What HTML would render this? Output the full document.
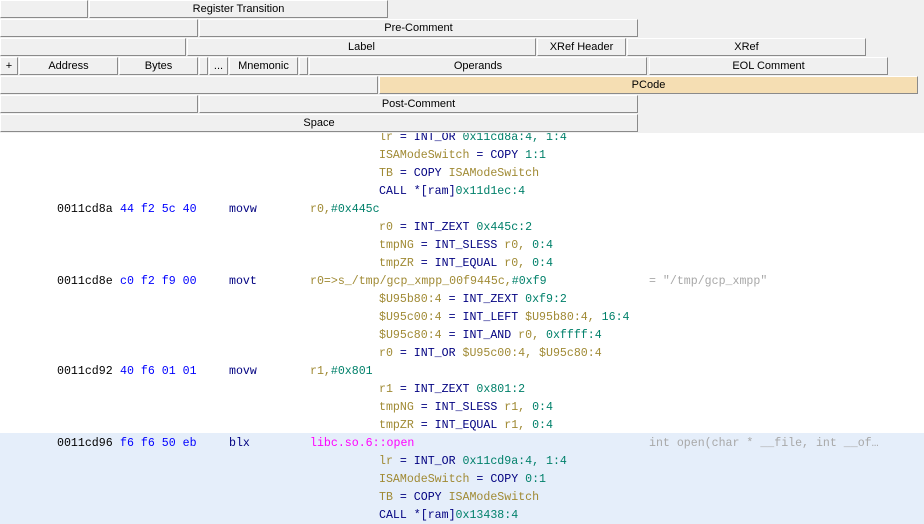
<!DOCTYPE html>
<html><head><style>
html,body{margin:0;width:924px;height:524px;overflow:hidden}
body{background:#fff;position:relative;font-family:"Liberation Sans",sans-serif}
#hdr{position:absolute;left:0;top:0;width:924px;height:133px;background:#f0f0f0;z-index:2}
.b{position:absolute;height:18px;background:#f0f0f0;border-top:1px solid #fff;border-left:1px solid #fff;border-right:1px solid #8a8a8a;border-bottom:1px solid #8a8a8a;box-sizing:border-box;font-size:11px;line-height:16px;text-align:center;color:#000;white-space:nowrap;overflow:hidden}
.p{background:#f5deb3}
#lst{position:absolute;left:0;top:127px;width:924px;font-family:"Liberation Mono",monospace;font-size:11.6px}
.l{position:relative;height:18px;line-height:18px;white-space:pre}
.l span{position:absolute;top:2px}
.l span span{position:static}
.hl{background:#e5eefa}
.a{color:#000}.by{color:#0000ff}.m{color:#000080}.v{color:#a08a34}.o{color:#000080}.c{color:#00806a}.mg{color:#ff00ff}.g{color:#a8a8a8}
</style></head><body>
<div id="hdr">
<div class="b" style="left:0;top:0;width:88px"></div>
<div class="b" style="left:89px;top:0;width:299px">Register Transition</div>
<div class="b" style="left:0;top:19px;width:198px"></div>
<div class="b" style="left:199px;top:19px;width:439px">Pre-Comment</div>
<div class="b" style="left:0;top:38px;width:186px"></div>
<div class="b" style="left:187px;top:38px;width:349px">Label</div>
<div class="b" style="left:537px;top:38px;width:89px">XRef Header</div>
<div class="b" style="left:627px;top:38px;width:239px">XRef</div>
<div class="b" style="left:0;top:57px;width:18px">+</div>
<div class="b" style="left:19px;top:57px;width:99px">Address</div>
<div class="b" style="left:119px;top:57px;width:79px">Bytes</div>
<div class="b" style="left:199px;top:57px;width:9px"></div>
<div class="b" style="left:209px;top:57px;width:19px">...</div>
<div class="b" style="left:229px;top:57px;width:69px">Mnemonic</div>
<div class="b" style="left:299px;top:57px;width:9px"></div>
<div class="b" style="left:309px;top:57px;width:338px">Operands</div>
<div class="b" style="left:649px;top:57px;width:239px">EOL Comment</div>
<div class="b" style="left:0;top:76px;width:378px"></div>
<div class="b p" style="left:379px;top:76px;width:539px">PCode</div>
<div class="b" style="left:0;top:95px;width:198px"></div>
<div class="b" style="left:199px;top:95px;width:439px">Post-Comment</div>
<div class="b" style="left:0;top:114px;width:638px">Space</div>
</div>
<div id="lst">
<div class="l"><span style="left:379px" class="v">lr <span class="o">= INT_OR</span> <span class="c">0x11cd8a:4, 1:4</span></span></div>
<div class="l"><span style="left:379px" class="v">ISAModeSwitch <span class="o">= COPY</span> <span class="c">1:1</span></span></div>
<div class="l"><span style="left:379px" class="v">TB <span class="o">= COPY</span> ISAModeSwitch</span></div>
<div class="l"><span style="left:379px" class="o">CALL *[ram]<span class="c">0x11d1ec:4</span></span></div>
<div class="l"><span style="left:57px" class="a">0011cd8a</span><span style="left:120px" class="by">44 f2 5c 40</span><span style="left:229px" class="m">movw</span><span style="left:310px" class="v">r0,<span class="c">#0x445c</span></span></div>
<div class="l"><span style="left:379px" class="v">r0 <span class="o">= INT_ZEXT</span> <span class="c">0x445c:2</span></span></div>
<div class="l"><span style="left:379px" class="v">tmpNG <span class="o">= INT_SLESS</span> r0, <span class="c">0:4</span></span></div>
<div class="l"><span style="left:379px" class="v">tmpZR <span class="o">= INT_EQUAL</span> r0, <span class="c">0:4</span></span></div>
<div class="l"><span style="left:57px" class="a">0011cd8e</span><span style="left:120px" class="by">c0 f2 f9 00</span><span style="left:229px" class="m">movt</span><span style="left:310px" class="v">r0=&gt;s_/tmp/gcp_xmpp_00f9445c,<span class="c">#0xf9</span></span><span style="left:649px" class="g">= "/tmp/gcp_xmpp"</span></div>
<div class="l"><span style="left:379px" class="v">$U95b80:4 <span class="o">= INT_ZEXT</span> <span class="c">0xf9:2</span></span></div>
<div class="l"><span style="left:379px" class="v">$U95c00:4 <span class="o">= INT_LEFT</span> $U95b80:4, <span class="c">16:4</span></span></div>
<div class="l"><span style="left:379px" class="v">$U95c80:4 <span class="o">= INT_AND</span> r0, <span class="c">0xffff:4</span></span></div>
<div class="l"><span style="left:379px" class="v">r0 <span class="o">= INT_OR</span> $U95c00:4, $U95c80:4</span></div>
<div class="l"><span style="left:57px" class="a">0011cd92</span><span style="left:120px" class="by">40 f6 01 01</span><span style="left:229px" class="m">movw</span><span style="left:310px" class="v">r1,<span class="c">#0x801</span></span></div>
<div class="l"><span style="left:379px" class="v">r1 <span class="o">= INT_ZEXT</span> <span class="c">0x801:2</span></span></div>
<div class="l"><span style="left:379px" class="v">tmpNG <span class="o">= INT_SLESS</span> r1, <span class="c">0:4</span></span></div>
<div class="l"><span style="left:379px" class="v">tmpZR <span class="o">= INT_EQUAL</span> r1, <span class="c">0:4</span></span></div>
<div class="l hl"><span style="left:57px" class="a">0011cd96</span><span style="left:120px" class="by">f6 f6 50 eb</span><span style="left:229px" class="m">blx</span><span style="left:310px" class="mg">libc.so.6::open</span><span style="left:649px" class="g">int open(char * __file, int __of…</span></div>
<div class="l hl"><span style="left:379px" class="v">lr <span class="o">= INT_OR</span> <span class="c">0x11cd9a:4, 1:4</span></span></div>
<div class="l hl"><span style="left:379px" class="v">ISAModeSwitch <span class="o">= COPY</span> <span class="c">0:1</span></span></div>
<div class="l hl"><span style="left:379px" class="v">TB <span class="o">= COPY</span> ISAModeSwitch</span></div>
<div class="l hl" style="height:19px"><span style="left:379px" class="o">CALL *[ram]<span class="c">0x13438:4</span></span></div>
</div>
</body></html>
